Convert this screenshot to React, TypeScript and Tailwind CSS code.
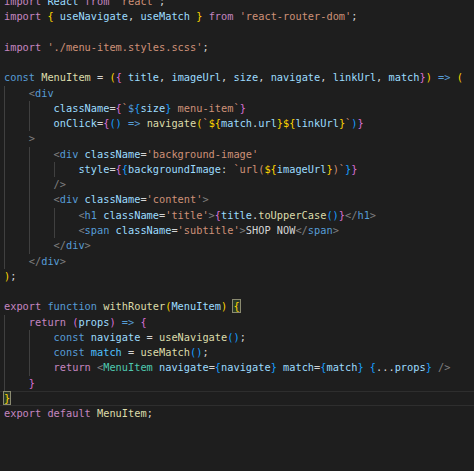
import React from "react";

type Tok = [string, string];

const C: Record<string, string> = {
  k: "text-[#c586c0]",
  b: "text-[#569cd6]",
  v: "text-[#9cdcfe]",
  c: "text-[#4fc1ff]",
  f: "text-[#dcdcaa]",
  s: "text-[#ce9178]",
  t: "text-[#4ec9b0]",
  g: "text-[#808080]",
  y: "text-[#ffd700]",
  o: "text-[#da70d6]",
  u: "text-[#179fff]",
  w: "text-[#d4d4d4]",
  Y: "text-[#ffd700] outline outline-1 outline-[#8a8a70] bg-[#2a3a2a]",
};

type Line = { indent: number; toks: Tok[]; current?: boolean };

const lines: Line[] = [
  { indent: 0, toks: [["k", "import"], ["w", " "], ["v", "React"], ["w", " "], ["k", "from"], ["w", " "], ["s", "'react'"], ["w", ";"]] },
  { indent: 0, toks: [["k", "import"], ["w", " "], ["y", "{"], ["w", " "], ["v", "useNavigate"], ["w", ", "], ["v", "useMatch"], ["w", " "], ["y", "}"], ["w", " "], ["k", "from"], ["w", " "], ["s", "'react-router-dom'"], ["w", ";"]] },
  { indent: 0, toks: [] },
  { indent: 0, toks: [["k", "import"], ["w", " "], ["s", "'./menu-item.styles.scss'"], ["w", ";"]] },
  { indent: 0, toks: [] },
  { indent: 0, toks: [["b", "const"], ["w", " "], ["f", "MenuItem"], ["w", " = "], ["y", "("], ["o", "{"], ["w", " "], ["v", "title"], ["w", ", "], ["v", "imageUrl"], ["w", ", "], ["v", "size"], ["w", ", "], ["v", "navigate"], ["w", ", "], ["v", "linkUrl"], ["w", ", "], ["v", "match"], ["o", "}"], ["y", ")"], ["w", " "], ["b", "=>"], ["w", " "], ["y", "("]] },
  { indent: 1, toks: [["g", "<"], ["b", "div"]] },
  { indent: 2, toks: [["v", "className"], ["w", "="], ["o", "{"], ["s", "`"], ["b", "$"], ["u", "{"], ["v", "size"], ["u", "}"], ["s", " menu-item`"], ["o", "}"]] },
  { indent: 2, toks: [["v", "onClick"], ["w", "="], ["o", "{"], ["u", "()"], ["w", " "], ["b", "=>"], ["w", " "], ["f", "navigate"], ["y", "("], ["s", "`"], ["y", "${"], ["v", "match"], ["w", "."], ["v", "url"], ["y", "}"], ["y", "${"], ["v", "linkUrl"], ["y", "}"], ["s", "`"], ["u", ")"], ["o", "}"]] },
  { indent: 1, toks: [["g", ">"]] },
  { indent: 2, toks: [["g", "<"], ["b", "div"], ["w", " "], ["v", "className"], ["w", "="], ["s", "'background-image'"]] },
  { indent: 3, toks: [["v", "style"], ["w", "="], ["o", "{"], ["u", "{"], ["v", "backgroundImage"], ["w", ": "], ["s", "`url("], ["y", "${"], ["v", "imageUrl"], ["y", "}"], ["s", ")`"], ["u", "}"], ["o", "}"]] },
  { indent: 2, toks: [["g", "/>"]] },
  { indent: 2, toks: [["g", "<"], ["b", "div"], ["w", " "], ["v", "className"], ["w", "="], ["s", "'content'"], ["g", ">"]] },
  { indent: 3, toks: [["g", "<"], ["b", "h1"], ["w", " "], ["v", "className"], ["w", "="], ["s", "'title'"], ["g", ">"], ["o", "{"], ["v", "title"], ["w", "."], ["f", "toUpperCase"], ["u", "()"], ["o", "}"], ["g", "</"], ["b", "h1"], ["g", ">"]] },
  { indent: 3, toks: [["g", "<"], ["b", "span"], ["w", " "], ["v", "className"], ["w", "="], ["s", "'subtitle'"], ["g", ">"], ["w", "SHOP NOW"], ["g", "</"], ["b", "span"], ["g", ">"]] },
  { indent: 2, toks: [["g", "</"], ["b", "div"], ["g", ">"]] },
  { indent: 1, toks: [["g", "</"], ["b", "div"], ["g", ">"]] },
  { indent: 0, toks: [["y", ")"], ["w", ";"]] },
  { indent: 0, toks: [] },
  { indent: 0, toks: [["k", "export"], ["w", " "], ["b", "function"], ["w", " "], ["f", "withRouter"], ["y", "("], ["v", "MenuItem"], ["y", ")"], ["w", " "], ["Y", "{"]] },
  { indent: 1, toks: [["k", "return"], ["w", " "], ["o", "("], ["v", "props"], ["o", ")"], ["w", " "], ["b", "=>"], ["w", " "], ["o", "{"]] },
  { indent: 2, toks: [["b", "const"], ["w", " "], ["v", "navigate"], ["w", " = "], ["f", "useNavigate"], ["u", "()"], ["w", ";"]] },
  { indent: 2, toks: [["b", "const"], ["w", " "], ["c", "match"], ["w", " = "], ["f", "useMatch"], ["u", "()"], ["w", ";"]] },
  { indent: 2, toks: [["k", "return"], ["w", " "], ["g", "<"], ["t", "MenuItem"], ["w", " "], ["v", "navigate"], ["w", "="], ["u", "{"], ["v", "navigate"], ["u", "}"], ["w", " "], ["v", "match"], ["w", "="], ["u", "{"], ["v", "match"], ["u", "}"], ["w", " "], ["u", "{"], ["w", "..."], ["v", "props"], ["u", "}"], ["w", " "], ["g", "/>"]] },
  { indent: 1, toks: [["o", "}"]] },
  { indent: 0, toks: [["Y", "}"]], current: true },
  { indent: 0, toks: [["k", "export"], ["w", " "], ["k", "default"], ["w", " "], ["f", "MenuItem"], ["w", ";"]] },
];

export default function App() {
  return (
    <div
      className="w-full h-[471px] overflow-hidden bg-[#1e1e1e] text-[10.3px] text-[#d4d4d4]"
      style={{ fontFamily: '"DejaVu Sans Mono", "Liberation Mono", monospace' }}
    >
      <div className="mt-[-6px] flex flex-col">
        {lines.map((ln, i) => (
          <div
            key={i}
            className={
              ln.current
                ? "h-[15.27px] leading-[15.27px] whitespace-pre pl-[4px] shadow-[inset_0_1px_0_#2e2e2e,inset_0_-1px_0_#2e2e2e]"
                : "h-[15.27px] leading-[15.27px] whitespace-pre pl-[4px]"
            }
          >
            {Array.from({ length: ln.indent }).map((_, j) => (
              <span
                key={"i" + j}
                className="inline-block w-[4ch] h-[15.27px] align-top border-l border-[#404040]"
              >
                {"    "}
              </span>
            ))}
            {ln.toks.map((t, j) => (
              <span key={j} className={C[t[0]]}>
                {t[1]}
              </span>
            ))}
          </div>
        ))}
      </div>
    </div>
  );
}
